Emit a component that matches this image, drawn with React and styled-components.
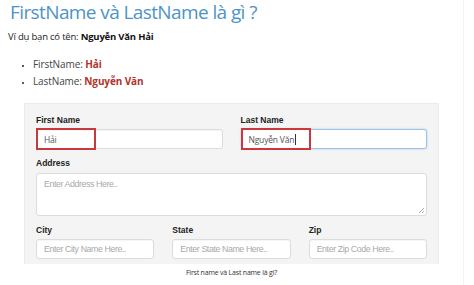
import React from 'react';
import styled, { createGlobalStyle } from 'styled-components';

const GlobalStyle = createGlobalStyle`
  html, body {
    margin: 0;
    padding: 0;
    background: #ffffff;
  }
  body {
    font-family: "Open Sans", "Liberation Sans", sans-serif;
  }
`;

const Page = styled.div`
  width: 474px;
  height: 285px;
  overflow: hidden;
  background: #fff;
`;

const Content = styled.div`
  width: 464px;
  height: 285px;
  border-right: 1px solid #f3f3f3;
  box-sizing: border-box;
  padding: 1px 0 0 8px;
`;

const Title = styled.h1`
  margin: 0 0 0 2px;
  font-family: "Open Sans", sans-serif;
  font-weight: 400;
  font-size: 19px;
  line-height: 23px;
  color: #4d94c5;
  letter-spacing: -0.6px;
`;

const Intro = styled.p`
  margin: 6px 0 0;
  font-size: 9.5px;
  line-height: 14px;
  letter-spacing: -0.2px;
  color: #222;

  b {
    font-weight: 700;
    color: #111;
  }
`;

const List = styled.ul`
  margin: 12px 0 0;
  padding-left: 25px;
  font-size: 10px;
  line-height: 17px;
  letter-spacing: -0.1px;
  color: #444;

  li::marker {
    color: #222;
    font-size: 7px;
  }
`;

const Red = styled.b`
  color: #b0342c;
  font-weight: 700;
`;

const Panel = styled.div`
  margin: 13px 0 0 16px;
  width: 415px;
  height: 161px;
  box-sizing: border-box;
  background: #f4f4f4;
  border: 1px solid #ebebeb;
  border-bottom: none;
  padding: 11px 11px 0 11px;
  display: flex;
  flex-direction: column;
  gap: 9px;
`;

const Row = styled.div`
  display: grid;
  grid-template-columns: repeat(${p => p.cols}, minmax(0, 1fr));
  column-gap: 18px;
`;

const Field = styled.div`
  display: flex;
  flex-direction: column;
  gap: ${p => p.gap || 3}px;
`;

const Label = styled.label`
  font-family: "Liberation Sans", Arial, sans-serif;
  font-weight: 700;
  font-size: 8.5px;
  line-height: 11px;
  color: #222;
`;

const InputWrap = styled.div`
  position: relative;
`;

const Input = styled.div`
  height: 20px;
  box-sizing: border-box;
  background: #fff;
  border: 1px solid ${p => (p.focus ? '#9ec3e6' : '#dcdcdc')};
  box-shadow: ${p => (p.focus ? '0 0 2px rgba(102,160,220,0.6)' : 'inset 0 1px 1px rgba(0,0,0,0.04)')};
  border-radius: 3px;
  padding: 0 7px;
  display: flex;
  align-items: center;
  font-family: "Liberation Sans", Arial, sans-serif;
  font-size: 8.8px;
  letter-spacing: -0.4px;
  color: ${p => (p.placeholder ? '#a9a9a9' : '#555')};
  white-space: nowrap;
  overflow: hidden;
`;

const Value = styled.span`
  font-family: "Open Sans", sans-serif;
  font-size: 8.5px;
  letter-spacing: -0.2px;
  color: #555;
`;

const Caret = styled.span`
  display: inline-block;
  width: 1px;
  height: 11px;
  background: #333;
  margin-left: 1px;
`;

const Highlight = styled.div`
  position: absolute;
  left: 0;
  top: -1px;
  width: ${p => p.w}px;
  height: 22px;
  box-sizing: border-box;
  border: 2px solid #c9383a;
`;

const TextArea = styled.div`
  position: relative;
  height: 43px;
  box-sizing: border-box;
  background: #fff;
  border: 1px solid #dcdcdc;
  border-radius: 3px;
  padding: 5px 7px;
  font-family: "Liberation Sans", Arial, sans-serif;
  font-size: 8.8px;
  letter-spacing: -0.4px;
  color: #a9a9a9;
`;

const Grip = styled.svg`
  position: absolute;
  right: 1px;
  bottom: 1px;
`;

const Caption = styled.div`
  margin: 4px 0 0 16px;
  width: 415px;
  text-align: center;
  font-size: 7px;
  line-height: 10px;
  letter-spacing: -0.2px;
  color: #333;
`;

export default function App() {
  return (
    <>
      <GlobalStyle />
      <Page>
        <Content>
          <Title>FirstName và LastName là gì ?</Title>
          <Intro>
            Ví dụ bạn có tên: <b>Nguyễn Văn Hải</b>
          </Intro>
          <List>
            <li>
              FirstName: <Red>Hải</Red>
            </li>
            <li>
              LastName: <Red>Nguyễn Văn</Red>
            </li>
          </List>
          <Panel>
            <Row cols={2}>
              <Field>
                <Label>First Name</Label>
                <InputWrap>
                  <Input>
                    <Value>Hải</Value>
                  </Input>
                  <Highlight w={60} />
                </InputWrap>
              </Field>
              <Field>
                <Label>Last Name</Label>
                <InputWrap>
                  <Input focus>
                    <Value>Nguyễn Văn</Value>
                    <Caret />
                  </Input>
                  <Highlight w={70} />
                </InputWrap>
              </Field>
            </Row>
            <Field gap={4}>
              <Label>Address</Label>
              <TextArea>
                Enter Address Here..
                <Grip width="7" height="7" viewBox="0 0 7 7">
                  <path d="M6 1L1 6M6 4L4 6" stroke="#999" strokeWidth="0.8" />
                </Grip>
              </TextArea>
            </Field>
            <Row cols={3}>
              <Field>
                <Label>City</Label>
                <Input placeholder>Enter City Name Here..</Input>
              </Field>
              <Field>
                <Label>State</Label>
                <Input placeholder>Enter State Name Here..</Input>
              </Field>
              <Field>
                <Label>Zip</Label>
                <Input placeholder>Enter Zip Code Here..</Input>
              </Field>
            </Row>
          </Panel>
          <Caption>First name và Last name là gì?</Caption>
        </Content>
      </Page>
    </>
  );
}
